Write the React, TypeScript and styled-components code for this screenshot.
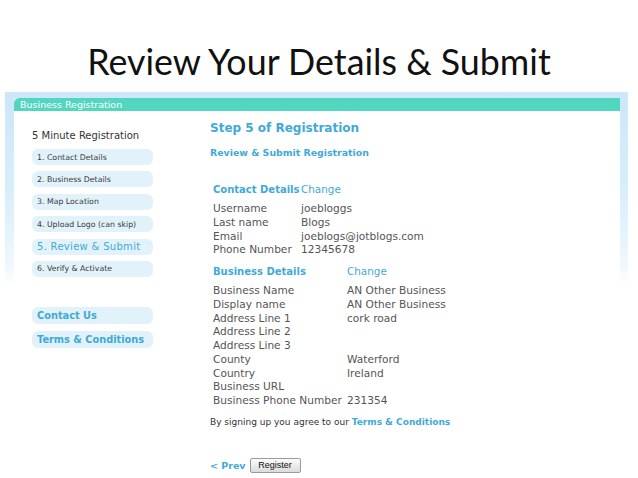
import React from 'react';
import styled, { createGlobalStyle } from 'styled-components';

const GlobalStyle = createGlobalStyle`
  html, body {
    margin: 0;
    padding: 0;
    background: #ffffff;
  }
  body {
    width: 638px;
    height: 478px;
    overflow: hidden;
    font-family: 'DejaVu Sans', 'Liberation Sans', sans-serif;
  }
`;

const Slide = styled.div`
  width: 638px;
  height: 478px;
  box-sizing: border-box;
`;

const SlideTitle = styled.h1`
  margin: 0;
  height: 92px;
  padding-top: 42px;
  box-sizing: border-box;
  text-align: center;
  font-family: Lato, 'Open Sans', sans-serif;
  font-weight: 400;
  font-size: 35.8px;
  line-height: 40px;
  color: #111111;
`;

const Frame = styled.div`
  margin-left: 5px;
  width: 623px;
  box-sizing: border-box;
  padding: 6px 8px 0 9px;
  background: linear-gradient(
    to bottom,
    #cce7f8 0px,
    #d9eefb 100px,
    #eef7fd 170px,
    #ffffff 195px
  );
`;

const Header = styled.div`
  height: 13px;
  background: #52d6bf;
  border-top-left-radius: 6px;
  color: #ffffff;
  font-size: 9.5px;
  line-height: 13px;
  padding-left: 6px;
`;

const Body = styled.div`
  display: flex;
  background: #ffffff;
  height: 367px;
`;

const Sidebar = styled.div`
  width: 178px;
  padding: 19px 0 0 18px;
  box-sizing: border-box;
  display: flex;
  flex-direction: column;
`;

const SideHeading = styled.div`
  font-size: 10px;
  color: #333333;
  margin-bottom: 8px;
`;

const StepList = styled.div`
  display: flex;
  flex-direction: column;
  gap: 6.4px;
`;

const Pill = styled.div<{ $active?: boolean; $link?: boolean }>`
  width: 121px;
  height: ${(p) => (p.$link ? '17px' : '16px')};
  border-radius: 6px;
  background: #e2f2fb;
  padding-left: 5px;
  box-sizing: border-box;
  display: flex;
  align-items: center;
  white-space: nowrap;
  font-size: ${(p) => (p.$active ? '10px' : p.$link ? '9.8px' : '7.8px')};
  font-weight: ${(p) => (p.$link ? 700 : 400)};
  color: ${(p) => (p.$active || p.$link ? '#3fa9d8' : '#3a3a3a')};
  letter-spacing: ${(p) => (p.$active ? '0.3px' : '0')};
`;

const LinkList = styled.div`
  display: flex;
  flex-direction: column;
  gap: 7px;
  margin-top: 30px;
`;

const Main = styled.div`
  flex: 1;
  padding: 9px 0 0 18px;
  box-sizing: border-box;
  color: #555555;
`;

const StepTitle = styled.div`
  font-size: 12px;
  font-weight: 700;
  color: #3fa9d8;
  line-height: 17px;
`;

const SubTitle = styled.div`
  font-size: 9.4px;
  font-weight: 700;
  color: #3fa9d8;
  margin-top: 10px;
  line-height: 12px;
`;

const Section = styled.div<{ $first?: boolean }>`
  margin-top: ${(p) => (p.$first ? '24px' : '8px')};
  padding-left: 3px;
`;

const DetailGrid = styled.div<{ $labelWidth: number }>`
  display: grid;
  grid-template-columns: ${(p) => p.$labelWidth}px auto;
  font-size: 10.6px;
  line-height: 13.75px;
  white-space: nowrap;
`;

const SectionHead = styled.div`
  font-size: 10px;
  font-weight: 700;
  color: #3fa9d8;
  line-height: 13px;
  margin-bottom: 6px;
`;

const ChangeLink = styled.div`
  font-size: 10.4px;
  color: #3fa9d8;
  line-height: 13px;
  margin-bottom: 6px;
`;

const Agreement = styled.div`
  margin-top: 9px;
  font-size: 9px;
  color: #333333;
  white-space: nowrap;
`;

const AgreeLink = styled.span`
  color: #3fa9d8;
  font-weight: 700;
`;

const Actions = styled.div`
  display: flex;
  align-items: center;
  gap: 4px;
  margin-top: 31px;
`;

const PrevLink = styled.span`
  color: #3fa9d8;
  font-weight: 700;
  font-size: 9.5px;
`;

const RegisterButton = styled.button`
  height: 15px;
  width: 51px;
  padding: 0;
  border: 1px solid #9a9a9a;
  border-radius: 2px;
  background: linear-gradient(to bottom, #fbfbfb, #dcdcdc);
  font-family: 'Liberation Sans', Arial, sans-serif;
  font-size: 9px;
  color: #111111;
`;

const contactRows = [
  ['Username', 'joebloggs'],
  ['Last name', 'Blogs'],
  ['Email', 'joeblogs@jotblogs.com'],
  ['Phone Number', '12345678'],
];

const businessRows = [
  ['Business Name', 'AN Other Business'],
  ['Display name', 'AN Other Business'],
  ['Address Line 1', 'cork road'],
  ['Address Line 2', ''],
  ['Address Line 3', ''],
  ['County', 'Waterford'],
  ['Country', 'Ireland'],
  ['Business URL', ''],
  ['Business Phone Number', '231354'],
];

const steps = [
  '1. Contact Details',
  '2. Business Details',
  '3. Map Location',
  '4. Upload Logo (can skip)',
  '5. Review & Submit',
  '6. Verify & Activate',
];

const App: React.FC = () => {
  return (
    <Slide>
      <GlobalStyle />
      <SlideTitle>Review Your Details &amp; Submit</SlideTitle>
      <Frame>
        <Header>Business Registration</Header>
        <Body>
          <Sidebar>
            <SideHeading>5 Minute Registration</SideHeading>
            <StepList>
              {steps.map((s, i) => (
                <Pill key={s} $active={i === 4}>
                  {s}
                </Pill>
              ))}
            </StepList>
            <LinkList>
              <Pill $link>Contact Us</Pill>
              <Pill $link>Terms &amp; Conditions</Pill>
            </LinkList>
          </Sidebar>
          <Main>
            <StepTitle>Step 5 of Registration</StepTitle>
            <SubTitle>Review &amp; Submit Registration</SubTitle>

            <Section $first>
              <DetailGrid $labelWidth={88}>
                <SectionHead>Contact Details</SectionHead>
                <ChangeLink>Change</ChangeLink>
                {contactRows.map(([label, value]) => (
                  <React.Fragment key={label}>
                    <span>{label}</span>
                    <span>{value}</span>
                  </React.Fragment>
                ))}
              </DetailGrid>
            </Section>

            <Section>
              <DetailGrid $labelWidth={134}>
                <SectionHead>Business Details</SectionHead>
                <ChangeLink>Change</ChangeLink>
                {businessRows.map(([label, value]) => (
                  <React.Fragment key={label}>
                    <span>{label}</span>
                    <span>{value}</span>
                  </React.Fragment>
                ))}
              </DetailGrid>
            </Section>

            <Agreement>
              By signing up you agree to our <AgreeLink>Terms &amp; Conditions</AgreeLink>
            </Agreement>

            <Actions>
              <PrevLink>&lt; Prev</PrevLink>
              <RegisterButton>Register</RegisterButton>
            </Actions>
          </Main>
        </Body>
      </Frame>
    </Slide>
  );
};

export default App;
